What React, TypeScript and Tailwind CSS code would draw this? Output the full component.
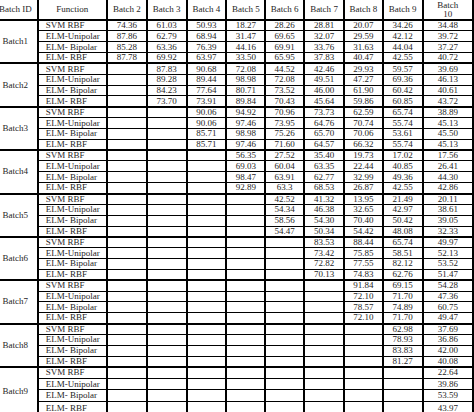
const batches: string[][][] = [
  [
    ["74.36", "61.03", "50.93", "18.27", "28.26", "28.81", "20.07", "34.26", "34.48"],
    ["87.86", "62.79", "68.94", "31.47", "69.65", "32.07", "29.59", "42.12", "39.72"],
    ["85.28", "63.36", "76.39", "44.16", "69.91", "33.76", "31.63", "44.04", "37.27"],
    ["87.78", "69.92", "63.97", "33.50", "65.95", "37.83", "40.47", "42.55", "40.72"],
  ],
  [
    ["87.83", "90.68", "72.08", "44.52", "42.46", "29.93", "59.57", "39.69"],
    ["89.28", "89.44", "98.98", "72.08", "49.51", "47.27", "69.36", "46.13"],
    ["84.23", "77.64", "80.71", "73.52", "46.00", "61.90", "60.42", "40.61"],
    ["73.70", "73.91", "89.84", "70.43", "45.64", "59.86", "60.85", "43.72"],
  ],
  [
    ["90.06", "94.92", "70.96", "73.73", "62.59", "65.74", "38.89"],
    ["90.06", "97.46", "73.95", "64.76", "70.74", "55.74", "45.13"],
    ["85.71", "98.98", "75.26", "65.70", "70.06", "53.61", "45.50"],
    ["85.71", "97.46", "71.60", "64.57", "66.32", "55.74", "45.13"],
  ],
  [
    ["56.35", "27.52", "35.40", "19.73", "17.02", "17.56"],
    ["69.03", "60.04", "63.35", "22.44", "40.85", "26.41"],
    ["98.47", "63.91", "62.77", "32.99", "49.36", "44.30"],
    ["92.89", "63.3", "68.53", "26.87", "42.55", "42.86"],
  ],
  [
    ["42.52", "41.32", "13.95", "21.49", "20.11"],
    ["54.34", "46.38", "32.65", "42.97", "38.61"],
    ["58.56", "54.30", "70.40", "50.42", "39.05"],
    ["54.47", "50.34", "54.42", "48.08", "32.33"],
  ],
  [
    ["83.53", "88.44", "65.74", "49.97"],
    ["73.42", "75.85", "58.51", "52.13"],
    ["72.82", "77.55", "82.12", "53.52"],
    ["70.13", "74.83", "62.76", "51.47"],
  ],
  [
    ["91.84", "69.15", "54.28"],
    ["72.10", "71.70", "47.36"],
    ["78.57", "74.89", "60.75"],
    ["72.10", "71.70", "49.47"],
  ],
  [
    ["62.98", "37.69"],
    ["78.93", "36.86"],
    ["83.83", "42.00"],
    ["81.27", "40.08"],
  ],
  [["22.64"], ["39.86"], ["53.59"], ["43.97"]],
];

const functions = ["SVM RBF", "ELM-Unipolar", "ELM- Bipolar", "ELM- RBF"];
const widths = [
  "w-[47px]",
  "w-[73px]",
  "w-[42px]",
  "w-[42px]",
  "w-[42px]",
  "w-[41px]",
  "w-[41px]",
  "w-[42px]",
  "w-[41px]",
  "w-[42px]",
  "w-[54px]",
];

const App = () => {
  return (
    <div className="w-[474px] h-[412px] overflow-hidden bg-white">
      <table
        className="table-fixed border-collapse -ml-[8px] -mt-[2px] text-[9px] leading-[9px] text-[#262626]"
        style={{ fontFamily: '"Liberation Serif", "Times New Roman", serif' }}
      >
        <colgroup>
          {widths.map((w, i) => (
            <col key={i} className={w} />
          ))}
        </colgroup>
        <thead>
          <tr className="h-[21px]">
            <th className="border-2 border-black p-0 font-normal text-center">Batch ID</th>
            <th className="border-2 border-black p-0 font-normal text-center">Function</th>
            {[2, 3, 4, 5, 6, 7, 8, 9].map((n) => (
              <th key={n} className="border-2 border-black p-0 font-normal text-center">
                Batch {n}
              </th>
            ))}
            <th className="border-2 border-black p-0 font-normal text-center leading-[9px]">
              Batch
              <br />
              10
            </th>
          </tr>
        </thead>
        <tbody>
          {batches.map((rows, b) =>
            rows.map((vals, r) => {
              const blanks = 9 - vals.length;
              const edge = r === 0 ? "border-t-2" : "border-t";
              const last = b === batches.length - 1;
              const height = last ? (r === 3 ? "h-[14px]" : "h-[11.4px]") : "h-[10.85px]";
              return (
                <tr key={`${b}-${r}`} className={height}>
                  {r === 0 && (
                    <td
                      rowSpan={4}
                      className="border-2 border-black p-0 text-center align-middle"
                    >
                      Batch{b + 1}
                    </td>
                  )}
                  <td className={`${edge} border-x-2 border-b border-black p-0 pl-[7px] text-left`}>
                    {functions[r]}
                  </td>
                  {Array.from({ length: blanks }).map((_, i) => (
                    <td key={`e${i}`} className={`${edge} border-x-2 border-b border-black p-0`} />
                  ))}
                  {vals.map((v, i) => (
                    <td
                      key={i}
                      className={`${edge} border-x-2 border-b border-black p-0 text-center`}
                    >
                      {v}
                    </td>
                  ))}
                </tr>
              );
            })
          )}
        </tbody>
      </table>
    </div>
  );
};

export default App;
